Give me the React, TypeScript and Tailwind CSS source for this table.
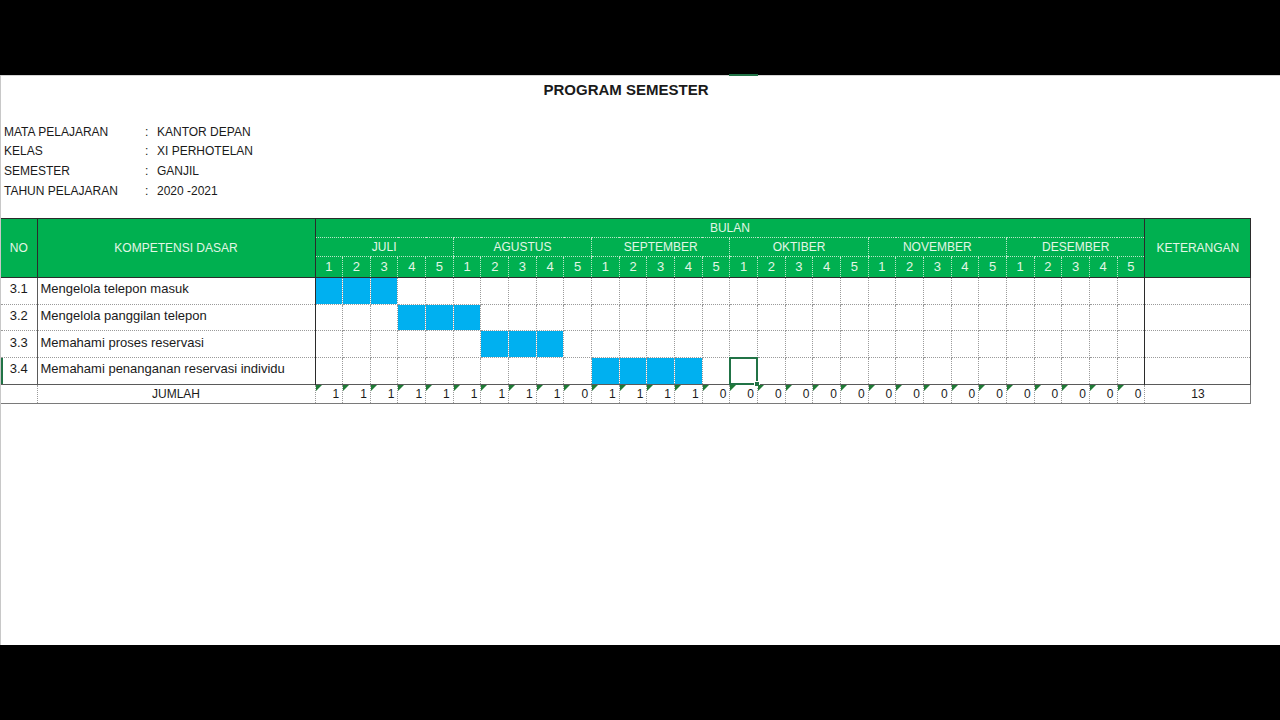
const months = ["JULI", "AGUSTUS", "SEPTEMBER", "OKTIBER", "NOVEMBER", "DESEMBER"];
const weeks = [1, 2, 3, 4, 5];

const rows = [
  { no: "3.1", kd: "Mengelola telepon masuk", on: [0, 1, 2] },
  { no: "3.2", kd: "Mengelola panggilan telepon", on: [3, 4, 5] },
  { no: "3.3", kd: "Memahami proses reservasi", on: [6, 7, 8] },
  { no: "3.4", kd: "Memahami penanganan reservasi individu", on: [10, 11, 12, 13] },
];

const cols = Array.from({ length: 30 }, (_, i) => i);
const totals = cols.map((c) => rows.filter((r) => r.on.includes(c)).length);
const total = totals.reduce((a, b) => a + b, 0);

const info = [
  ["MATA PELAJARAN", "KANTOR DEPAN"],
  ["KELAS", "XI PERHOTELAN"],
  ["SEMESTER", "GANJIL"],
  ["TAHUN PELAJARAN", "2020 -2021"],
];

function Flag() {
  return (
    <div className="absolute left-0 top-0 w-0 h-0 border-t-[6px] border-t-[#1f7a36] border-r-[6px] border-r-transparent" />
  );
}

export default function App() {
  return (
    <div className="w-[1280px] h-[720px] bg-black flex flex-col font-['Liberation_Sans',Arial,sans-serif] text-[#1a1a1a]">
      <div className="h-[75px] shrink-0" />

      <div className="h-[570px] shrink-0 bg-white border-l border-[#c8c8c8] flex flex-col">
        {/* sheet column header edge */}
        <div className="h-px bg-[#d4d4d4] flex">
          <div className="w-[728px]" />
          <div className="w-[29px] h-[2px] -mt-px bg-[#217346]" />
        </div>

        <div className="w-[1250px] mt-[4px] h-[20px] leading-[20px] text-center text-[15px] font-bold">
          PROGRAM SEMESTER
        </div>

        <div className="mt-[22px] text-[12px] pl-[3px]">
          {info.map(([k, v]) => (
            <div key={k} className="flex h-[19.6px] items-center">
              <span className="w-[141px]">{k}</span>
              <span className="w-[12px]">:</span>
              <span>{v}</span>
            </div>
          ))}
        </div>

        <table className="mt-[18px] w-[1250px] table-fixed border-collapse text-[12px]">
          <colgroup>
            <col className="w-[36px]" />
            <col className="w-[278px]" />
            {cols.map((c) => (
              <col key={c} className="w-[27.667px]" />
            ))}
            <col className="w-[106px]" />
          </colgroup>
          <thead className="bg-[#00b050] text-[#e3f6e6]">
            <tr className="h-[19px]">
              <th rowSpan={3} className="font-normal border-t border-b border-r border-solid border-[#2b2b2b]">
                NO
              </th>
              <th rowSpan={3} className="font-normal border-t border-b border-r border-solid border-[#2b2b2b]">
                KOMPETENSI DASAR
              </th>
              <th
                colSpan={30}
                className="font-normal border-t border-b [border-style:solid_none_dotted_none] border-t-[#2b2b2b] border-b-[#b9e6c6]"
              >
                BULAN
              </th>
              <th rowSpan={3} className="font-normal border border-solid border-[#2b2b2b]">
                KETERANGAN
              </th>
            </tr>
            <tr className="h-[19px]">
              {months.map((m, i) => (
                <th
                  key={m}
                  colSpan={5}
                  className={
                    i === 0
                      ? "font-normal border-b border-dotted border-[#b9e6c6]"
                      : "font-normal border-b border-l border-dotted border-[#b9e6c6]"
                  }
                >
                  {m}
                </th>
              ))}
            </tr>
            <tr className="h-[19px] text-[13px]">
              {months.map((m) =>
                weeks.map((w) => (
                  <th
                    key={m + w}
                    className={
                      m === "JULI" && w === 1
                        ? "font-normal border-b border-solid border-b-[#2b2b2b]"
                        : "font-normal border-l border-b [border-style:none_none_solid_dotted] border-l-[#b9e6c6] border-b-[#2b2b2b]"
                    }
                  >
                    {w}
                  </th>
                ))
              )}
            </tr>
          </thead>
          <tbody className="text-[13px]">
            {rows.map((r, ri) => (
              <tr key={r.no} className="h-[26.75px]">
                <td
                  className={
                    ri === 3
                      ? "text-center align-middle pb-[4px] border-b border-r [border-style:none_solid_dotted_none] border-b-[#9a9a9a] border-r-[#5a5a5a] shadow-[inset_2px_0_0_#217346]"
                      : "text-center align-middle pb-[4px] border-b border-r [border-style:none_solid_dotted_none] border-b-[#9a9a9a] border-r-[#5a5a5a]"
                  }
                >
                  {r.no}
                </td>
                <td className="pl-[3px] align-middle pb-[4px] truncate border-b border-r [border-style:none_solid_dotted_none] border-b-[#9a9a9a] border-r-[#2b2b2b]">
                  {r.kd}
                </td>
                {cols.map((c) => {
                  const on = r.on.includes(c);
                  const sel = ri === 3 && c === 15;
                  return (
                    <td
                      key={c}
                      className={
                        on
                          ? "relative bg-[#00b0f0] border border-dotted border-[#9a9a9a]"
                          : "relative border border-dotted border-[#9a9a9a]"
                      }
                    >
                      {sel && (
                        <div className="absolute -left-px -top-px -right-px -bottom-px border-2 border-[#217346]">
                          <div className="absolute -right-[4px] -bottom-[4px] w-[6px] h-[6px] bg-[#217346] border border-white" />
                        </div>
                      )}
                    </td>
                  );
                })}
                <td className="border-l border-r border-b [border-style:none_solid_dotted_solid] border-l-[#2b2b2b] border-r-[#5a5a5a] border-b-[#9a9a9a]" />
              </tr>
            ))}
            <tr className="h-[19px] text-[12px]">
              <td className="border-t border-b border-r [border-style:solid_dotted_solid_none] border-t-[#5a5a5a] border-b-[#7a7a7a] border-r-[#9a9a9a]" />
              <td className="text-center border-t border-b border-r [border-style:solid_dotted_solid_none] border-t-[#5a5a5a] border-b-[#7a7a7a] border-r-[#9a9a9a]">
                JUMLAH
              </td>
              {totals.map((t, c) => (
                <td
                  key={c}
                  className="relative text-right pr-[3px] border-t border-b border-r [border-style:solid_dotted_solid_none] border-t-[#5a5a5a] border-b-[#7a7a7a] border-r-[#9a9a9a]"
                >
                  <Flag />
                  {t}
                </td>
              ))}
              <td className="text-center border-t border-b border-r border-solid border-t-[#5a5a5a] border-b-[#7a7a7a] border-r-[#7a7a7a]">
                {total}
              </td>
            </tr>
          </tbody>
        </table>
      </div>

      <div className="h-[75px] shrink-0" />
    </div>
  );
}
